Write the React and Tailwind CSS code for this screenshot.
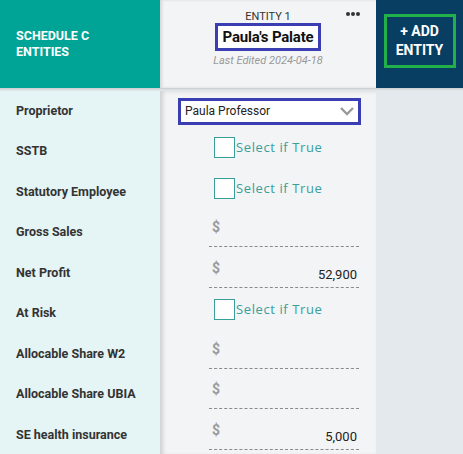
import React from "react";

const rows = [
  { label: "Proprietor", type: "select", value: "Paula Professor" },
  { label: "SSTB", type: "check" },
  { label: "Statutory Employee", type: "check" },
  { label: "Gross Sales", type: "money", value: "" },
  { label: "Net Profit", type: "money", value: "52,900" },
  { label: "At Risk", type: "check" },
  { label: "Allocable Share W2", type: "money", value: "" },
  { label: "Allocable Share UBIA", type: "money", value: "" },
  { label: "SE health insurance", type: "money", value: "5,000" },
];

const Field = ({ row }) => {
  if (row.type === "select") {
    return (
      <div className="flex h-full items-center pl-[18px]">
        <div className="flex h-[27px] w-[183px] items-center justify-between border-[3px] border-[#3b3db3] bg-white pl-[4px] pr-[3px] text-[12px] text-[#222]">
          <span>{row.value}</span>
          <svg width="16" height="10" viewBox="0 0 16 10">
            <path d="M2 2 L8 8 L14 2" fill="none" stroke="#9a9a9a" strokeWidth="2.4" />
          </svg>
        </div>
      </div>
    );
  }
  if (row.type === "check") {
    return (
      <div className="flex h-full items-center pb-[8px] pl-[54px]">
        <div className="h-[21px] w-[21px] border border-[#3a9e9a] bg-white" />
        <span className="ml-[1px] text-[13px] tracking-[0.6px] text-[#3a9e9a] [font-family:'Open_Sans',sans-serif]">
          Select if True
        </span>
      </div>
    );
  }
  return (
    <div className="flex h-full items-end pb-[6px] pl-[49px]">
      <div className="flex h-[29px] w-[150px] items-start justify-between border-b border-dashed border-[#8a8a8a] pl-[3px] pr-[2px]">
        <span className="text-[14px] font-bold leading-[18px] text-[#9a9a9a]">$</span>
        <span className="pt-[6px] text-[13px] text-[#222]">{row.value}</span>
      </div>
    </div>
  );
};

const App = () => {
  return (
    <div className="h-[454px] w-[463px] overflow-hidden bg-[#e4e9ed] [font-family:Roboto,'Liberation_Sans',sans-serif]">
      <div className="flex h-[88px]">
        <div className="flex w-[160px] items-center bg-[#00a496] pl-[16px] text-[12.5px] font-bold leading-[16px] text-white">
          <div>
            SCHEDULE C
            <br />
            ENTITIES
          </div>
        </div>
        <div className="relative flex w-[216px] flex-col items-center bg-[#f3f4f6] pt-[10px] shadow-[inset_2px_0_3px_rgba(0,0,0,0.12)]">
          <div className="text-[11px] leading-[13px] text-[#333]">ENTITY 1</div>
          <div className="mt-[0px] border-[3px] border-[#3b3db3] bg-white px-[5px] text-[15px] font-bold leading-[22px] tracking-[-0.2px] text-[#111]">
            Paula's Palate
          </div>
          <div className="mt-[2px] text-[11px] italic text-[#9a9a9a]">Last Edited 2024-04-18</div>
          <div className="absolute right-[16px] top-[12px] flex gap-[1px]">
            <span className="h-[4px] w-[4px] rounded-full bg-[#333]" />
            <span className="h-[4px] w-[4px] rounded-full bg-[#333]" />
            <span className="h-[4px] w-[4px] rounded-full bg-[#333]" />
          </div>
        </div>
        <div className="flex flex-1 items-start justify-center bg-[#083e62] pt-[14px]">
          <div className="flex h-[54px] w-[72px] items-center justify-center border-[3px] border-[#22b04b] text-center text-[14px] font-bold leading-[19px] text-white">
            + ADD
            <br />
            ENTITY
          </div>
        </div>
      </div>
      <div className="h-[3px] bg-gradient-to-b from-[#c8cdd1] to-[#e9ecee]" />
      <div className="flex">
        <div className="w-[160px] bg-[#e5f4f4]">
          {rows.map((r) => (
            <div key={r.label} className="flex h-[40.5px] items-center pl-[16px] text-[12.5px] font-bold text-[#333]">
              {r.label}
            </div>
          ))}
        </div>
        <div className="w-[216px] bg-[#f2f4f6] shadow-[inset_3px_0_4px_rgba(0,0,0,0.15)]">
          {rows.map((r) => (
            <div key={r.label} className="h-[40.5px]">
              <Field row={r} />
            </div>
          ))}
        </div>
        <div className="flex-1" />
      </div>
    </div>
  );
};

export default App;
